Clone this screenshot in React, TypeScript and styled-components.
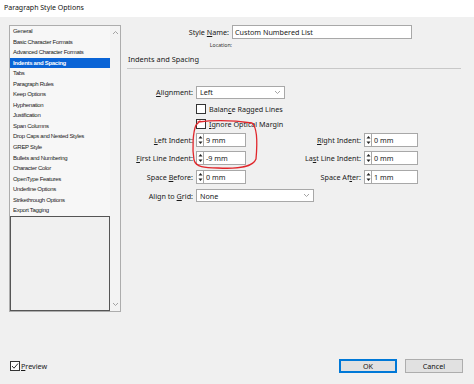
import styled, { createGlobalStyle } from "styled-components";

const GlobalStyle = createGlobalStyle`
    html, body {
        margin: 0;
        padding: 0;
        background: #f0f0f0;
    }

    body {
        font-family: "Noto Sans", "Open Sans", sans-serif;
        color: #1a1a1a;
    }
`;

const listItems = [
    "General",
    "Basic Character Formats",
    "Advanced Character Formats",
    "Indents and Spacing",
    "Tabs",
    "Paragraph Rules",
    "Keep Options",
    "Hyphenation",
    "Justification",
    "Span Columns",
    "Drop Caps and Nested Styles",
    "GREP Style",
    "Bullets and Numbering",
    "Character Color",
    "OpenType Features",
    "Underline Options",
    "Strikethrough Options",
    "Export Tagging",
];

const Chevron = ({ up }: { up?: boolean }) => (
    <svg width="7" height="5" viewBox="0 0 7 5">
        <path
            d={up ? "M1 4 L3.5 1.5 L6 4" : "M1 1 L3.5 3.5 L6 1"}
            fill="none"
            stroke="#9a9a9a"
            strokeWidth="0.9"
        />
    </svg>
);

const Spinner = ({ value }: { value: string }) => (
    <SpinWrap>
        <SpinArrows>
            <svg width="5" height="12" viewBox="0 0 5 12">
                <path d="M0.5 4.5 L2.5 2 L4.5 4.5 Z" fill="#222" />
                <path d="M0.5 7.5 L2.5 10 L4.5 7.5 Z" fill="#222" />
            </svg>
        </SpinArrows>
        <SpinField>{value}</SpinField>
    </SpinWrap>
);

const Check = ({ checked }: { checked?: boolean }) => (
    <CheckBox>
        {checked && (
            <svg width="8" height="8" viewBox="0 0 8 8">
                <path
                    d="M1 4 L3 6.2 L7 1.5"
                    fill="none"
                    stroke="#333"
                    strokeWidth="1"
                />
            </svg>
        )}
    </CheckBox>
);

const App = () => {
    return (
        <>
            <GlobalStyle />
            <Dialog>
                <TitleBar>Paragraph Style Options</TitleBar>
                <Body>
                    <ListBox>
                        <ListColumn>
                            <Items>
                                {listItems.map((item, i) => (
                                    <Item key={item} $selected={i === 3}>
                                        {item}
                                    </Item>
                                ))}
                            </Items>
                            <EmptyArea />
                        </ListColumn>
                        <ScrollBar>
                            <Chevron up />
                            <Chevron />
                        </ScrollBar>
                    </ListBox>
                    <Main>
                        <NameRow>
                            <NameLabel>
                                Style <u>N</u>ame:
                            </NameLabel>
                            <NameField>Custom Numbered List</NameField>
                        </NameRow>
                        <LocationRow>Location:</LocationRow>
                        <SectionTitle>Indents and Spacing</SectionTitle>
                        <Rule />
                        <FormGrid>
                            <Label>
                                <u>A</u>lignment:
                            </Label>
                            <Select $width={89}>
                                <span>Left</span>
                                <Chevron />
                            </Select>
                            <CheckRow>
                                <Check />
                                <span>
                                    Balan<u>c</u>e Ragged Lines
                                </span>
                            </CheckRow>
                            <CheckRow>
                                <Check />
                                <span>
                                    <u>I</u>gnore Optical Margin
                                </span>
                            </CheckRow>

                            <Label>
                                <u>L</u>eft Indent:
                            </Label>
                            <Spinner value="9 mm" />
                            <Label>
                                <u>R</u>ight Indent:
                            </Label>
                            <Spinner value="0 mm" />

                            <Label>
                                <u>F</u>irst Line Indent:
                            </Label>
                            <Spinner value="-9 mm" />
                            <Label>
                                La<u>s</u>t Line Indent:
                            </Label>
                            <Spinner value="0 mm" />

                            <Label>
                                Space <u>B</u>efore:
                            </Label>
                            <Spinner value="0 mm" />
                            <Label>
                                Space Af<u>t</u>er:
                            </Label>
                            <Spinner value="1 mm" />

                            <Label>
                                Align to <u>G</u>rid:
                            </Label>
                            <Select $width={118}>
                                <span>None</span>
                                <Chevron />
                            </Select>
                        </FormGrid>
                    </Main>
                </Body>
                <Footer>
                    <PreviewToggle>
                        <Check checked />
                        <span>
                            <u>P</u>review
                        </span>
                    </PreviewToggle>
                    <Buttons>
                        <Button $default>OK</Button>
                        <Button>Cancel</Button>
                    </Buttons>
                </Footer>
                <Annotation width="474" height="384" viewBox="0 0 474 384">
                    <path
                        d="M198 122 C215 120 238 121 252 123 C258 128 257 148 256 159 C253 167 240 169 218 168 C204 168 196 167 194 160 C192 148 193 132 196 125 L200 121"
                        fill="none"
                        stroke="#e0262b"
                        strokeWidth="1.3"
                        strokeLinecap="round"
                    />
                </Annotation>
            </Dialog>
        </>
    );
};

const Dialog = styled.div`
    position: relative;
    width: 474px;
    height: 384px;
    background: #f0f0f0;
    display: flex;
    flex-direction: column;
    overflow: hidden;
`;

const TitleBar = styled.div`
    height: 17px;
    flex-shrink: 0;
    background: #ffffff;
    padding-left: 4px;
    font-size: 7px;
    line-height: 16px;
    color: #111;
`;

const Body = styled.div`
    display: flex;
    flex-shrink: 0;
    padding: 8px 0 0 9px;
    height: 296px;
`;

const ListBox = styled.div`
    display: flex;
    width: 110px;
    height: 285px;
    border: 1px solid #adadad;
    background: #ffffff;
`;

const ListColumn = styled.div`
    display: flex;
    flex-direction: column;
    width: 100px;
`;

const Items = styled.div`
    display: flex;
    flex-direction: column;
`;

const Item = styled.div<{ $selected?: boolean }>`
    height: 10.55px;
    line-height: 10.55px;
    padding-left: 3px;
    font-family: "Liberation Sans", Arial, sans-serif;
    font-size: 6px;
    letter-spacing: -0.3px;
    white-space: nowrap;
    background: ${({ $selected }) => ($selected ? "#0a64d6" : "#f7f7f7")};
    color: ${({ $selected }) => ($selected ? "#ffffff" : "#222")};
    font-weight: ${({ $selected }) => ($selected ? 700 : 400)};
`;

const EmptyArea = styled.div`
    flex: 1;
    border: 1px solid #555;
    background: #f0f0f0;
`;

const ScrollBar = styled.div`
    width: 10px;
    display: flex;
    flex-direction: column;
    align-items: center;
    justify-content: space-between;
    padding: 4px 0;
    background: #f3f3f3;
`;

const Main = styled.div`
    margin-left: 6px;
    width: 334px;
    display: flex;
    flex-direction: column;
`;

const NameRow = styled.div`
    display: flex;
    align-items: center;
    gap: 3px;
    height: 13px;
`;

const NameLabel = styled.span`
    width: 102px;
    text-align: right;
    font-size: 7.2px;
`;

const NameField = styled.div`
    width: 176px;
    height: 12px;
    border: 1px solid #a8a8a8;
    background: #fff;
    font-size: 7.2px;
    line-height: 12px;
    padding-left: 2px;
`;

const LocationRow = styled.div`
    width: 105px;
    margin-top: 3px;
    text-align: right;
    font-size: 5.2px;
    line-height: 8px;
    color: #333;
`;

const SectionTitle = styled.div`
    margin-top: 5px;
    font-size: 7.4px;
    line-height: 11px;
    padding-left: 1px;
`;

const Rule = styled.div`
    margin-top: 3px;
    height: 1px;
    width: 334px;
    background: #c8c8c8;
`;

const FormGrid = styled.div`
    margin-top: 14px;
    display: grid;
    grid-template-columns: 66px 50px 112px 54px;
    grid-template-rows: 18px 15px 15px 18px 18px 19px 19px;
    column-gap: 3px;
    align-items: center;
    font-size: 7.2px;
`;

const Label = styled.span`
    text-align: right;
    white-space: nowrap;
`;

const Select = styled.div<{ $width: number }>`
    grid-column: 2 / span 3;
    width: ${({ $width }) => $width}px;
    height: 13px;
    border: 1px solid #a8a8a8;
    background: #fff;
    display: flex;
    align-items: center;
    justify-content: space-between;
    padding: 0 3px;
    box-sizing: border-box;
`;

const CheckRow = styled.label`
    grid-column: 2 / span 3;
    display: flex;
    align-items: center;
    gap: 3px;
`;

const CheckBox = styled.span`
    width: 8px;
    height: 8px;
    border: 1px solid #333;
    background: #fff;
    display: inline-flex;
    align-items: center;
    justify-content: center;
`;

const SpinWrap = styled.div`
    display: flex;
    height: 14px;
`;

const SpinArrows = styled.div`
    width: 7px;
    border: 1px solid #a8a8a8;
    border-right: none;
    background: #fff;
    display: flex;
    align-items: center;
    justify-content: center;
    box-sizing: border-box;
`;

const SpinField = styled.div`
    flex: 1;
    border: 1px solid #a8a8a8;
    background: #fff;
    line-height: 12px;
    padding-left: 2px;
`;

const Footer = styled.div`
    display: flex;
    align-items: center;
    justify-content: space-between;
    margin-top: 38px;
    padding: 0 11px 0 10px;
    height: 14px;
`;

const PreviewToggle = styled.label`
    display: flex;
    align-items: center;
    gap: 1px;
    font-size: 7.2px;
`;

const Buttons = styled.div`
    display: flex;
    gap: 8px;
`;

const Button = styled.button<{ $default?: boolean }>`
    width: 58px;
    height: 14px;
    padding: 0;
    font-family: "Noto Sans", sans-serif;
    font-size: 7.2px;
    color: #111;
    background: #e1e1e1;
    border: 1px solid ${({ $default }) => ($default ? "#0078d7" : "#adadad")};
    box-shadow: ${({ $default }) =>
        $default ? "inset 0 0 0 1px #0078d7" : "none"};
`;

const Annotation = styled.svg`
    position: absolute;
    left: 0;
    top: 0;
    pointer-events: none;
`;

export default App;
